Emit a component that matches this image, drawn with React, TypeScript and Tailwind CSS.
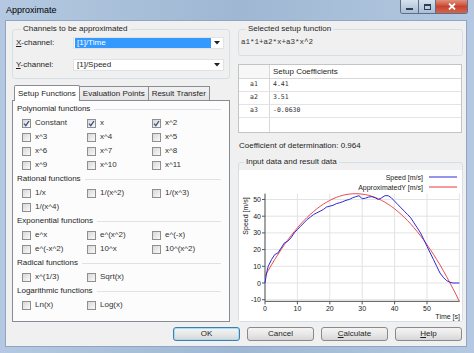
import type { ReactNode } from "react"

type Item = [string, boolean?]

const sections: { title: string; items: Item[] }[] = [
  {
    title: "Polynomial functions",
    items: [["Constant", true], ["x", true], ["x^2", true], ["x^3"], ["x^4"], ["x^5"], ["x^6"], ["x^7"], ["x^8"], ["x^9"], ["x^10"], ["x^11"]],
  },
  { title: "Rational functions", items: [["1/x"], ["1/(x^2)"], ["1/(x^3)"], ["1/(x^4)"]] },
  { title: "Exponential functions", items: [["e^x"], ["e^(x^2)"], ["e^(-x)"], ["e^(-x^2)"], ["10^x"], ["10^(x^2)"]] },
  { title: "Radical functions", items: [["x^(1/3)"], ["Sqrt(x)"]] },
  { title: "Logarithmic functions", items: [["Ln(x)"], ["Log(x)"]] },
]

// measured speed curve (t in s, v in m/s)
const speed: [number, number][] = [
  [0, 0], [0.5, 6], [1, 10], [2, 14], [3, 17], [4, 18], [5, 21], [6, 24], [7, 25], [8, 27], [9, 30], [10, 32],
  [11, 34], [12, 36], [13, 38], [14, 39.5], [15, 41], [16, 42], [17, 43], [18, 44], [19, 45.5], [20, 46],
  [21, 46.5], [22, 47.5], [23, 48], [24, 48.7], [25, 49.5], [26, 50], [27, 51], [28, 51.7], [29, 52.3],
  [30, 50.5], [31, 50.8], [32, 51.5], [33, 51.7], [34, 51], [35, 50], [36, 51], [37, 52.3], [38, 52.3],
  [39, 51], [40, 49], [41, 47], [42, 45], [43, 43], [44, 41], [45, 39], [46, 36], [47, 33], [48, 30],
  [49, 26], [50, 22], [51, 18], [52, 14], [53, 10], [54, 6], [55, 3.5], [56, 1.5], [57, 0.5], [58, 0],
  [59, 0], [60, 0],
]

function CheckBox({ label, checked }: { label: string; checked?: boolean }) {
  return (
    <div className="flex items-center gap-[4px] h-[14px]">
      <span className="w-[9px] h-[9px] shrink-0 border border-[#8f8f8f] bg-gradient-to-br from-[#d8d8d8] to-[#fafafa] flex items-center justify-center">
        {checked && (
          <svg width="7" height="7" viewBox="0 0 7 7">
            <path d="M1 3.6 L2.8 5.6 L6 1" fill="none" stroke="#3a4f8a" strokeWidth="1.3" />
          </svg>
        )}
      </span>
      <span className="text-[#333]">{label}</span>
    </div>
  )
}

function Combo({ value, selected }: { value: string; selected?: boolean }) {
  return (
    <div className="flex items-center w-[151px] h-[12px] bg-white border border-[#e2e2e2]">
      <span className={selected ? "ml-[1px] flex-1 h-[10px] flex items-center px-[2px] bg-[#3399ff] text-white" : "flex-1 h-[10px] flex items-center px-[3px]"}>
        {value}
      </span>
      <span className="w-[12px] flex justify-center">
        <svg width="6" height="4" viewBox="0 0 6 4">
          <path d="M0 0 H6 L3 3.5 Z" fill="#222" />
        </svg>
      </span>
    </div>
  )
}

function Group({ title, className, children }: { title: string; className?: string; children: ReactNode }) {
  return (
    <fieldset className={"border border-[#d5dfe5] rounded-[3px] " + (className ?? "")}>
      <legend className="ml-[5px] px-[2px] h-[10px] leading-[10px] text-[#1e1e1e]">{title}</legend>
      {children}
    </fieldset>
  )
}

function Btn({ children, primary }: { children: ReactNode; primary?: boolean }) {
  return (
    <button
      className={
        "w-[67px] h-[14px] rounded-[3px] border bg-gradient-to-b from-[#f4f4f4] via-[#e8e8e8] to-[#d6d6d6] text-[#1e1e1e] flex items-center justify-center " +
        (primary ? "border-[#3c7fb1] shadow-[inset_0_0_0_1px_#a8dbf6]" : "border-[#8a8a8a]")
      }
    >
      {children}
    </button>
  )
}

function Chart() {
  const px = (t: number) => 26 + t * 3.24
  const py = (v: number) => 113 - v * 1.67
  const bluePath = speed.map(([t, v], i) => `${i ? "L" : "M"}${px(t).toFixed(1)} ${py(v).toFixed(1)}`).join(" ")
  const red: string[] = []
  for (let t = 0; t <= 60; t += 1) {
    const v = 53.5 - 0.0631 * (t - 28) * (t - 28)
    red.push(`${t ? "L" : "M"}${px(t).toFixed(1)} ${py(v).toFixed(1)}`)
  }
  const xs = [0, 10, 20, 30, 40, 50]
  const ys = [50, 40, 30, 20, 10, 0, -10]
  const top = py(53.5)
  const bottom = py(-11)
  const right = px(60)

  return (
    <svg width="222" height="151" viewBox="0 0 222 151" className="block">
      {xs.concat([60]).map((t) => (
        <line key={t} x1={px(t)} x2={px(t)} y1={top} y2={bottom} stroke="#e3e3e3" strokeWidth="1" />
      ))}
      {ys.map((v) => (
        <line key={v} x1={px(0)} x2={right} y1={py(v)} y2={py(v)} stroke="#e3e3e3" strokeWidth="1" />
      ))}
      <line x1={px(0)} x2={px(0)} y1={top} y2={bottom} stroke="#555" />
      <line x1={px(0)} x2={right} y1={bottom} y2={bottom} stroke="#555" />
      {ys.map((v) => (
        <g key={v}>
          <line x1={px(0) - 3} x2={px(0)} y1={py(v)} y2={py(v)} stroke="#555" />
          <text x={22} y={py(v) + 2.5} textAnchor="end" fontSize="7" fill="#222">{v}</text>
        </g>
      ))}
      {xs.map((t) => (
        <g key={t}>
          <line x1={px(t)} x2={px(t)} y1={bottom} y2={bottom + 3} stroke="#555" />
          <text x={px(t)} y={bottom + 10} textAnchor="middle" fontSize="7" fill="#222">{t}</text>
        </g>
      ))}
      <text x="221" y="149" textAnchor="end" fontSize="7" fill="#222">Time [s]</text>
      <text transform="translate(9 46) rotate(-90)" textAnchor="middle" fontSize="7" fill="#222">Speed [m/s]</text>

      <path d={red.join(" ")} fill="none" stroke="#e8393a" strokeWidth="0.9" />
      <path d={bluePath} fill="none" stroke="#2b2bd8" strokeWidth="1" />

      <text x="184" y="9.5" textAnchor="end" fontSize="7" fill="#222">Speed [m/s]</text>
      <line x1="190" x2="218" y1="7" y2="7" stroke="#2b2bd8" strokeWidth="1" />
      <text x="184" y="19.5" textAnchor="end" fontSize="7" fill="#222">ApproximatedY [m/s]</text>
      <line x1="190" x2="218" y1="17" y2="17" stroke="#e8393a" strokeWidth="1" />
    </svg>
  )
}

export default function App() {
  const coeffs = [
    ["a1", "4.41"],
    ["a2", "3.51"],
    ["a3", "-0.0630"],
  ]

  return (
    <div className="w-[474px] h-[353px] overflow-hidden flex flex-col bg-gradient-to-r from-[#b4c9e1] via-[#9fb7d3] to-[#b4c9e1] font-['Liberation_Sans',Arial,sans-serif] text-[8px] text-[#1e1e1e]">
      {/* Title bar */}
      <div className="h-[20px] flex items-start justify-between pr-[6px]">
        <span className="pl-[6px] h-[20px] leading-[20px] text-[9px] text-black">Approximate</span>
        <div className="flex h-[14px] rounded-b-[3px] border border-t-0 border-[#5d6f86] overflow-hidden">
          <span className="w-[18px] bg-gradient-to-b from-[#d5e1ee] to-[#a9bdd5] border-r border-[#5d6f86] flex items-center justify-center">
            <span className="w-[7px] h-[2px] mt-[4px] bg-[#2d3d52]" />
          </span>
          <span className="w-[17px] bg-gradient-to-b from-[#d5e1ee] to-[#a9bdd5] border-r border-[#5d6f86] flex items-center justify-center">
            <span className="w-[7px] h-[6px] border border-t-2 border-[#2d3d52]" />
          </span>
          <span className="w-[31px] bg-gradient-to-b from-[#e0907f] via-[#c8432d] to-[#d2664f] flex items-center justify-center">
            <svg width="8" height="7" viewBox="0 0 8 7">
              <path d="M1 0.5 L7 6.5 M7 0.5 L1 6.5" stroke="#fff" strokeWidth="1.8" />
            </svg>
          </span>
        </div>
      </div>

      {/* Client area */}
      <div className="ml-[5px] w-[462px] h-[327px] bg-[#f0f0f0] border border-[#8ea6c2] flex flex-col">
        <div className="flex gap-[8px] pl-[6px]">
          {/* Left column */}
          <div className="w-[218px] flex flex-col">
            <Group title="Channels to be approximated" className="mt-[3px] h-[55px] px-[3px]">
              <div className="flex items-center h-[12px] mt-[3px]">
                <span className="w-[57px]"><u>X</u>-channel:</span>
                <Combo value="[1]/Time" selected />
              </div>
              <div className="flex items-center h-[12px] mt-[10px]">
                <span className="w-[57px]"><u>Y</u>-channel:</span>
                <Combo value="[1]/Speed" />
              </div>
            </Group>

            {/* Tabs */}
            <div className="mt-[6px] flex items-end h-[15px] pl-[2px]">
              <span className="h-[16px] -mb-[1px] px-[3px] flex items-center bg-white border border-b-0 border-[#898c95] rounded-t-[2px] relative z-10">
                Setup Functions
              </span>
              <span className="h-[14px] px-[3px] flex items-center bg-gradient-to-b from-[#f2f2f2] to-[#e3e3e3] border border-l-0 border-b-0 border-[#898c95]">
                Evaluation Points
              </span>
              <span className="h-[14px] px-[3px] flex items-center bg-gradient-to-b from-[#f2f2f2] to-[#e3e3e3] border border-l-0 border-b-0 border-[#898c95]">
                Result Transfer
              </span>
            </div>
            <div className="h-[222px] bg-[#fcfcfc] border border-[#898c95] pt-[1px] pr-[8px]">
              {sections.map((s) => (
                <div key={s.title}>
                  <div className="flex items-center gap-[4px] h-[14px] pl-[4px]">
                    <span className="text-[#1e1e1e]">{s.title}</span>
                    <span className="flex-1 h-px bg-[#e2e2e2]" />
                  </div>
                  <div className="grid grid-cols-[65px_65px_65px] pl-[9px]">
                    {s.items.map(([label, checked]) => (
                      <CheckBox key={label} label={label} checked={checked} />
                    ))}
                  </div>
                </div>
              ))}
            </div>
          </div>

          {/* Right column */}
          <div className="w-[225px] flex flex-col">
            <Group title="Selected setup function" className="mt-[3px] h-[32px] px-[2px]">
              <div className="mt-[3px] h-[10px] leading-[10px] font-['Liberation_Mono',monospace] text-[7.5px] text-[#333]">
                a1*1+a2*x+a3*x^2
              </div>
            </Group>

            <div className="mt-[8px] h-[69px] mr-[1px] bg-white border border-[#c4c4c4] flex flex-col">
              <div className="flex h-[14px] border-b border-[#d8d8d8]">
                <span className="w-[31px] border-r border-[#d8d8d8] bg-[#f7f7f7]" />
                <span className="pl-[3px] flex items-center">Setup Coefficients</span>
              </div>
              {coeffs.map(([k, v]) => (
                <div key={k} className="flex h-[13px] border-b border-[#e4e4e4] font-['DejaVu_Sans_Mono',monospace] text-[6.5px] text-[#333]">
                  <span className="w-[31px] border-r border-[#d8d8d8] flex items-center justify-center">{k}</span>
                  <span className="pl-[3px] flex items-center">{v}</span>
                </div>
              ))}
              <div className="flex flex-1">
                <span className="w-[31px] border-r border-[#d8d8d8]" />
              </div>
            </div>

            <div className="mt-[8px] h-[10px] leading-[10px] pl-[1px]">Coefficient of determination: 0.964</div>

            <Group title="Input data and result data" className="mt-[6px]">
              <div className="mt-[3px] bg-white">
                <Chart />
              </div>
            </Group>
          </div>
        </div>

        {/* Buttons */}
        <div className="mt-auto mb-[5px] flex justify-end gap-[7px] pr-[4px]">
          <Btn primary>OK</Btn>
          <Btn>Cancel</Btn>
          <Btn><u>C</u>alculate</Btn>
          <Btn><u>H</u>elp</Btn>
        </div>
      </div>
    </div>
  )
}
